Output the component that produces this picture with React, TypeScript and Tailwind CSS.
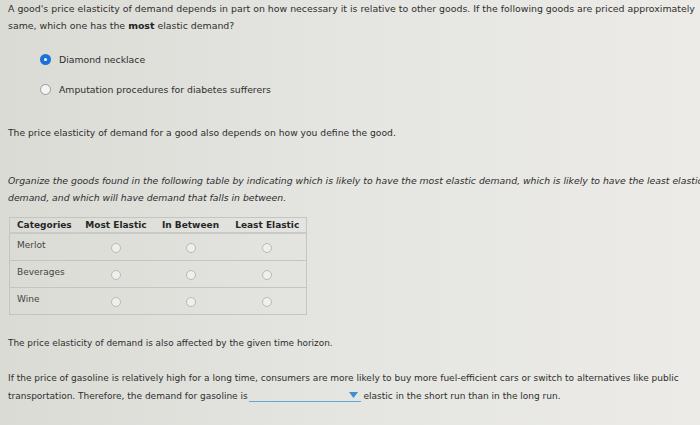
import React from 'react'

const font = { fontFamily: '"DejaVu Sans", Verdana, sans-serif' }

function Radio({ checked }: { checked?: boolean }) {
  if (checked)
    return (
      <span className="flex h-[11px] w-[11px] items-center justify-center rounded-full bg-[#1c72d6]">
        <span className="h-[3px] w-[3px] rounded-full bg-white" />
      </span>
    )
  return <span className="h-[11px] w-[11px] rounded-full border border-[#9a9a9a] bg-[#f4f4f2]" />
}

function CellRadio() {
  return <span className="mx-auto mt-[2px] block h-[10px] w-[10px] rounded-full border border-[#b9b9b6] bg-[#efefec]" />
}

const rows = ['Merlot', 'Beverages', 'Wine']

export default function App() {
  return (
    <div
      style={font}
      className="relative h-[425px] w-[700px] overflow-hidden bg-linear-to-r from-[#dbdbd6] via-[#e5e5e1] to-[#ecebe7] text-[9px] leading-[17px] text-[#2e2e2e]"
    >
      <div className="px-2">
        <p className="whitespace-nowrap text-[9.4px]">
          A good's price elasticity of demand depends in part on how necessary it is relative to other goods. If the following goods are priced approximately
          <br />
          same, which one has the <b className="font-bold text-[#1e1e1e]">most</b> elastic demand?
        </p>

        <div className="mt-[17px] flex flex-col gap-[13px] pl-[32px] text-[9.3px]">
          <label className="flex items-center gap-[8px]">
            <Radio checked />
            <span>Diamond necklace</span>
          </label>
          <label className="flex items-center gap-[8px]">
            <Radio />
            <span>Amputation procedures for diabetes sufferers</span>
          </label>
        </div>

        <p className="mt-[26px] text-[9.2px]">The price elasticity of demand for a good also depends on how you define the good.</p>

        <p className="mt-[31px] whitespace-nowrap text-[9.3px] italic">
          Organize the goods found in the following table by indicating which is likely to have the most elastic demand, which is likely to have the least elastic
          <br />
          demand, and which will have demand that falls in between.
        </p>

        <table className="mt-[11px] ml-[1px] table-fixed border-collapse border border-[#c4c4c0]">
          <thead>
            <tr className="h-[15px] border-b-2 border-[#c9c9c5] text-[#262626]">
              <th className="w-[70px] pl-[7px] text-left font-bold leading-[14px]">Categories</th>
              <th className="w-[73px] text-center font-bold leading-[14px]">Most Elastic</th>
              <th className="w-[76px] text-center font-bold leading-[14px]">In Between</th>
              <th className="w-[78px] text-center font-bold leading-[14px]">Least Elastic</th>
            </tr>
          </thead>
          <tbody>
            {rows.map(r => (
              <tr key={r} className="h-[27px] border-b border-[#c4c4c0] text-[#444]">
                <td className="pl-[7px] pb-[3px] align-middle">{r}</td>
                <td><CellRadio /></td>
                <td><CellRadio /></td>
                <td><CellRadio /></td>
              </tr>
            ))}
          </tbody>
        </table>

        <p className="mt-[20px] text-[8.9px]">The price elasticity of demand is also affected by the given time horizon.</p>

        <p className="mt-[18px] whitespace-nowrap text-[9px]">
          If the price of gasoline is relatively high for a long time, consumers are more likely to buy more fuel-efficient cars or switch to alternatives like public
          <br />
          transportation. Therefore, the demand for gasoline is
          <span className="relative ml-[1px] inline-block h-[12px] w-[112px] translate-y-[3px] border-b border-[#5fa8d8] align-baseline">
            <svg className="absolute right-[3px] top-[2px]" width="9" height="6" viewBox="0 0 9 6">
              <path d="M0 0 L9 0 L4.5 6 Z" fill="#3b8fd4" />
            </svg>
          </span>{' '}
          elastic in the short run than in the long run.
        </p>
      </div>
    </div>
  )
}
